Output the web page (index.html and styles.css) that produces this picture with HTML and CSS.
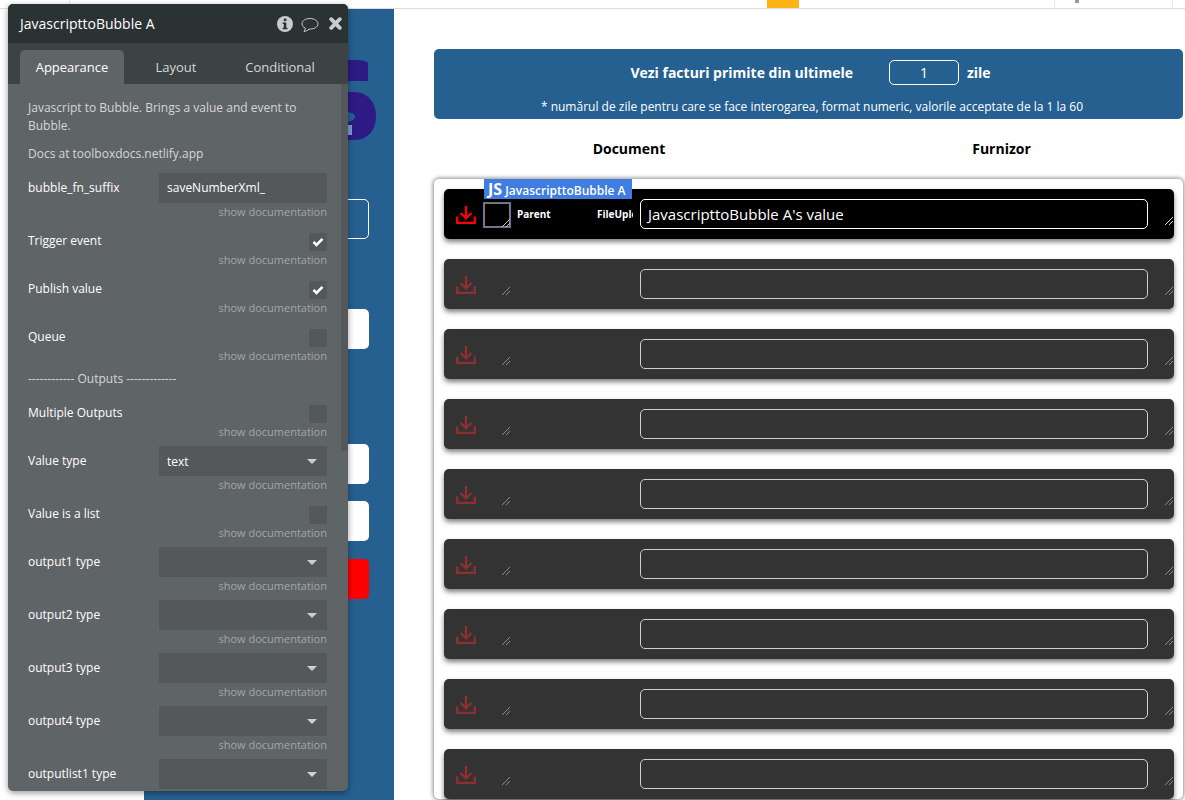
FILE: index.html
```html
<!DOCTYPE html>
<html lang="ro">
<head>
<meta charset="utf-8">
<title>JavascripttoBubble A</title>
<link rel="stylesheet" href="styles.css">
</head>
<body>
<svg class="defs" width="0" height="0" aria-hidden="true">
  <symbol id="dl" viewBox="0 0 20 20"><path d="M10 1v12M4.600 8 10 13.400 15.400 8M1.200 11.500v6.300h17.600v-6.300" fill="none" stroke="currentColor" stroke-width="2.300"/></symbol>
  <symbol id="grip" viewBox="0 0 8 8"><path d="M0 8 8 0M4 8 8 4" fill="none" stroke="currentColor" stroke-width="1"/></symbol>
</svg>
<div class="page">
  <header class="topbar">
    <div class="top-cell"></div>
    <div class="top-amber"></div>
    <div class="top-tool"><span class="tool-mark"></span></div>
  </header>
  <div class="stage">
    <aside class="side">
      <svg class="logo" viewBox="0 0 60 81" width="60" height="81" aria-hidden="true">
        <path d="M0 0H40Q50 1 50 3V21H0Z" fill="#2d1a85"/>
        <path d="M0 32H36C50 32 58 43 58 56C58 70 50 80 36 80H0Z" fill="#2d1a85"/>
        <path d="M0 52H30Q37 53 37 57Q36 61 30 62H0Z" fill="#266090"/>
        <rect x="24" y="65" width="10" height="10" fill="#7f9fd0"/>
      </svg>
      <div class="w w-outline"></div>
      <div class="w w-a"></div>
      <div class="w w-b"></div>
      <div class="w w-c"></div>
      <div class="w w-red"></div>
    </aside>
    <main class="main">
      <section class="banner">
        <div class="banner-line">
          <span class="banner-title">Vezi facturi primite din ultimele</span>
          <span class="day-input">1</span>
          <span class="banner-title">zile</span>
        </div>
        <p class="banner-note">* numărul de zile pentru care se face interogarea, format numeric, valorile acceptate de la 1 la 60</p>
      </section>
      <div class="heads"><span>Document</span><span>Furnizor</span></div>
      <section class="list">
        <div class="row row-on">
          <div class="tag"><b class="tag-js">JS</b> JavascripttoBubble A</div>
          <svg class="dl"><use href="#dl"/></svg>
          <div class="slot">
            <div class="sel"><svg class="grip g-sel"><use href="#grip"/></svg></div>
            <span class="mini mini-parent">Parent</span>
            <span class="mini">FileUpload</span>
          </div>
          <div class="field">JavascripttoBubble A's value</div>
          <svg class="grip g-end"><use href="#grip"/></svg>
        </div>
        <div class="row"><svg class="dl"><use href="#dl"/></svg><div class="slot"><svg class="grip g-cell"><use href="#grip"/></svg></div><div class="field"></div><svg class="grip g-end"><use href="#grip"/></svg></div>
        <div class="row"><svg class="dl"><use href="#dl"/></svg><div class="slot"><svg class="grip g-cell"><use href="#grip"/></svg></div><div class="field"></div><svg class="grip g-end"><use href="#grip"/></svg></div>
        <div class="row"><svg class="dl"><use href="#dl"/></svg><div class="slot"><svg class="grip g-cell"><use href="#grip"/></svg></div><div class="field"></div><svg class="grip g-end"><use href="#grip"/></svg></div>
        <div class="row"><svg class="dl"><use href="#dl"/></svg><div class="slot"><svg class="grip g-cell"><use href="#grip"/></svg></div><div class="field"></div><svg class="grip g-end"><use href="#grip"/></svg></div>
        <div class="row"><svg class="dl"><use href="#dl"/></svg><div class="slot"><svg class="grip g-cell"><use href="#grip"/></svg></div><div class="field"></div><svg class="grip g-end"><use href="#grip"/></svg></div>
        <div class="row"><svg class="dl"><use href="#dl"/></svg><div class="slot"><svg class="grip g-cell"><use href="#grip"/></svg></div><div class="field"></div><svg class="grip g-end"><use href="#grip"/></svg></div>
        <div class="row"><svg class="dl"><use href="#dl"/></svg><div class="slot"><svg class="grip g-cell"><use href="#grip"/></svg></div><div class="field"></div><svg class="grip g-end"><use href="#grip"/></svg></div>
        <div class="row"><svg class="dl"><use href="#dl"/></svg><div class="slot"><svg class="grip g-cell"><use href="#grip"/></svg></div><div class="field"></div><svg class="grip g-end"><use href="#grip"/></svg></div>
      </section>
    </main>
  </div>

  <div class="panel">
    <div class="panel-head">
      <span class="panel-title">JavascripttoBubble A</span>
      <svg class="ic-info" viewBox="0 0 16 16" aria-hidden="true"><circle cx="8" cy="8" r="8" fill="#c9cbcc"/><rect x="6.800" y="2.600" width="2.600" height="2.500" fill="#2b3234"/><path d="M5.600 6.500H9.300V11.700H10.500V13.300H5.600V11.700H6.800V8.100H5.600Z" fill="#2b3234"/></svg>
      <svg class="ic-chat" viewBox="0 0 18 16" aria-hidden="true"><path d="M9 1.500C4.600 1.500 1 3.800 1 6.800C1 8.700 2.300 10.200 4.400 11.200C4.200 12.600 3.500 13.700 3 14.500C5 14.200 6.800 13.300 8 12.100H9C13.400 12.100 17 9.700 17 6.800C17 3.800 13.400 1.500 9 1.500Z" fill="none" stroke="#c9cbcc" stroke-width="1"/></svg>
      <svg class="ic-close" viewBox="0 0 13 13" aria-hidden="true"><path d="M2.200 2.200 10.800 10.800M10.800 2.200 2.200 10.800" stroke="#c9cbcc" stroke-width="3.800" stroke-linecap="round"/></svg>
    </div>
    <nav class="tabs">
      <span class="tab tab-on">Appearance</span>
      <span class="tab">Layout</span>
      <span class="tab">Conditional</span>
    </nav>
    <div class="panel-body">
      <div class="scroll"></div>
      <p class="desc">Javascript to Bubble. Brings a value and event to Bubble.</p>
      <p class="desc desc-docs">Docs at toolboxdocs.netlify.app</p>

      <div class="prop prop-first"><span class="lbl">bubble_fn_suffix</span><span class="ctl">saveNumberXml_</span></div>
      <div class="doc">show documentation</div>

      <div class="prop prop-cb"><span class="lbl">Trigger event</span><span class="cb"><svg viewBox="0 0 12 10" aria-hidden="true"><path d="M1.500 5 4.500 8 10.500 1.800" fill="none" stroke="#fff" stroke-width="2.600"/></svg></span></div>
      <div class="doc">show documentation</div>

      <div class="prop prop-cb"><span class="lbl">Publish value</span><span class="cb"><svg viewBox="0 0 12 10" aria-hidden="true"><path d="M1.500 5 4.500 8 10.500 1.800" fill="none" stroke="#fff" stroke-width="2.600"/></svg></span></div>
      <div class="doc">show documentation</div>

      <div class="prop prop-cb"><span class="lbl">Queue</span><span class="cb"></span></div>
      <div class="doc">show documentation</div>

      <p class="sep">------------ Outputs -------------</p>

      <div class="prop prop-cb prop-multi"><span class="lbl">Multiple Outputs</span><span class="cb"></span></div>
      <div class="doc">show documentation</div>

      <div class="prop prop-dd"><span class="lbl">Value type</span><span class="ctl ctl-dd">text</span></div>
      <div class="doc">show documentation</div>

      <div class="prop prop-cb"><span class="lbl">Value is a list</span><span class="cb"></span></div>
      <div class="doc">show documentation</div>

      <div class="prop prop-dd"><span class="lbl">output1 type</span><span class="ctl ctl-dd"></span></div>
      <div class="doc">show documentation</div>
      <div class="prop prop-dd"><span class="lbl">output2 type</span><span class="ctl ctl-dd"></span></div>
      <div class="doc">show documentation</div>
      <div class="prop prop-dd"><span class="lbl">output3 type</span><span class="ctl ctl-dd"></span></div>
      <div class="doc">show documentation</div>
      <div class="prop prop-dd"><span class="lbl">output4 type</span><span class="ctl ctl-dd"></span></div>
      <div class="doc">show documentation</div>
      <div class="prop prop-dd"><span class="lbl">outputlist1 type</span><span class="ctl ctl-dd"></span></div>
    </div>
  </div>
</div>
</body>
</html>
```

FILE: styles.css
```css
* { box-sizing: border-box; }
html, body { margin: 0; padding: 0; background: #fff; }
body { font-family: "Open Sans", "Liberation Sans", sans-serif; }
.defs { position: absolute; }
.page { position: relative; width: 1185px; height: 800px; overflow: hidden; }

.topbar { display: flex; height: 9px; border-bottom: 1px solid #dedede; }
.top-cell { width: 70px; border-right: 1px solid #e6e6e6; }
.top-amber { width: 32px; margin-left: 697px; background: #fdb515; }
.top-tool { width: 119px; margin-left: 255px; border-left: 1px solid #e6e6e6; border-right: 1px solid #e6e6e6; padding-left: 20px; }
.tool-mark { display: block; width: 4px; height: 3px; background: #999; }

.stage { display: flex; height: 791px; }
.side { width: 250px; margin-left: 144px; background: #266090; display: flex; flex-direction: column; align-items: flex-end; padding-right: 25px; padding-top: 51px; }
.logo { display: block; margin-right: -9px; flex: none; }
.w { width: 225px; height: 40px; border-radius: 5px; flex: none; }
.w-outline { margin-top: 58px; border: 1px solid #fff; }
.w-a { margin-top: 70px; background: #fff; }
.w-b { margin-top: 95px; background: #fff; }
.w-c { margin-top: 17px; background: #fff; }
.w-red { margin-top: 18px; background: #f00; }

.main { width: 791px; padding: 40px 2px 0 40px; }
.banner { height: 70px; background: #266090; border-radius: 5px; padding-top: 11px; color: #fff; }
.banner-line { display: flex; justify-content: center; align-items: center; height: 25px; padding-left: 4px; }
.banner-title { font-size: 14px; font-weight: 700; line-height: 25px; }
.day-input { width: 70px; height: 25px; margin: 0 8px 0 36px; border: 1px solid #fff; border-radius: 5px; font-size: 14px; line-height: 23px; text-align: center; }
.banner-note { margin: 13px 0 0; padding-left: 7px; font-size: 12px; line-height: 18px; text-align: center; }

.heads { display: grid; grid-template-columns: 390px 355px; height: 60px; padding-top: 20px; font-size: 14px; font-weight: 700; line-height: 20px; color: #000; text-align: center; }

.list { height: 620px; background: #fff; border-radius: 5px; box-shadow: 0 0 4px 1px rgba(0,0,0,.45); padding: 10px 9px 0 10px; display: flex; flex-direction: column; gap: 20px; }
.row { position: relative; display: flex; flex: none; height: 50px; background: #333; border-radius: 5px; box-shadow: 0 3px 5px rgba(0,0,0,.5); }
.row-on { background: #000; }
.dl { display: block; width: 20px; height: 20px; margin: 16px 0 0 12px; color: #8f2f2f; flex: none; }
.row-on .dl { color: #f00; }
.slot { position: relative; display: flex; width: 150px; margin-left: 7px; flex: none; overflow: hidden; }
.sel { position: absolute; left: 0; top: 13px; width: 28px; height: 26px; border: 1px solid #2f7fd6; box-shadow: inset 0 0 0 1px #b8701a; }
.mini { position: absolute; left: 114px; top: 18px; font-size: 10px; font-weight: 700; line-height: 14px; color: #fff; white-space: nowrap; }
.mini-parent { left: 34px; }
.field { width: 508px; height: 30px; margin: 10px 0 0 7px; flex: none; border: 1px solid #cfcfcf; border-radius: 5px; padding-left: 7px; font-size: 15px; line-height: 28px; color: #fff; }
.row-on .field { border-color: #fff; }
.grip { position: absolute; width: 8px; height: 8px; color: #8a8a8a; }
.g-cell { left: 19px; top: 28px; }
.g-sel { right: 0; bottom: 0; color: #c8c8c8; }
.g-end { right: 1px; top: 28px; }
.row-on .g-end { color: #d0d0d0; }
.tag { position: absolute; left: 40px; top: -10px; z-index: 2; width: 148px; height: 20px; padding-left: 4px; background: #3f7de0; color: #fff; font-size: 12px; font-weight: 600; line-height: 20px; white-space: nowrap; }
.tag-js { font-size: 16px; font-weight: 700; }

.panel { position: absolute; left: 8px; top: 4px; width: 340px; height: 787px; border-radius: 5px; overflow: hidden; background: #5f6467; box-shadow: 0 2px 6px rgba(0,0,0,.4); }
.panel-head { display: flex; align-items: center; height: 39px; background: #2b3234; padding: 0 6px 0 12px; }
.panel-title { flex: 1; font-size: 14px; color: #fff; line-height: 39px; }
.ic-info { width: 16px; height: 16px; margin-right: 8px; }
.ic-chat { width: 18px; height: 16px; margin: 3px 10px 0 0; }
.ic-close { width: 13px; height: 13px; }
.tabs { display: flex; height: 41px; background: #3d4345; padding: 7px 0 0 12px; }
.tab { width: 104px; height: 34px; font-size: 13px; line-height: 34px; text-align: center; color: #d6d8d9; border-radius: 5px 5px 0 0; }
.tab-on { background: #5f6467; color: #fff; }

.panel-body { position: relative; padding: 15px 21px 0 20px; height: 707px; overflow: hidden; }
.scroll { position: absolute; right: 0; top: 0; width: 7px; height: 367px; background: #54585a; }
.desc { margin: 0 0 10px; font-size: 12px; line-height: 18px; color: #d5d7d8; }
.desc-docs { margin-bottom: 0; }
.sep { margin: 5px 0 0; font-size: 12px; line-height: 18px; color: #d5d7d8; }
.prop { display: flex; justify-content: space-between; align-items: flex-start; }
.prop-first { margin-top: 10px; }
.prop-cb { margin-top: 12px; }
.prop-dd { margin-top: 5px; }
.prop-multi { margin-top: 17px; }
.lbl { font-size: 12px; line-height: 29px; color: #fff; white-space: nowrap; }
.prop-dd .lbl { line-height: 30px; }
.prop-cb .lbl { line-height: 18px; margin-top: -1px; }
.ctl { position: relative; display: block; width: 168px; height: 30px; padding-left: 8px; background: #54585a; font-size: 12px; line-height: 30px; color: #fff; }
.ctl-dd { line-height: 31px; }
.ctl-dd::after { content: ""; position: absolute; right: 10px; top: 13px; border-style: solid; border-width: 5px 5px 0; border-color: #c8d0d6 transparent transparent; }
.cb { display: flex; align-items: center; justify-content: center; width: 18px; height: 18px; background: #54585a; }
.cb svg { width: 12px; height: 10px; }
.doc { height: 18px; font-size: 11px; line-height: 18px; text-align: right; color: #a4a6a8; white-space: nowrap; }
```
